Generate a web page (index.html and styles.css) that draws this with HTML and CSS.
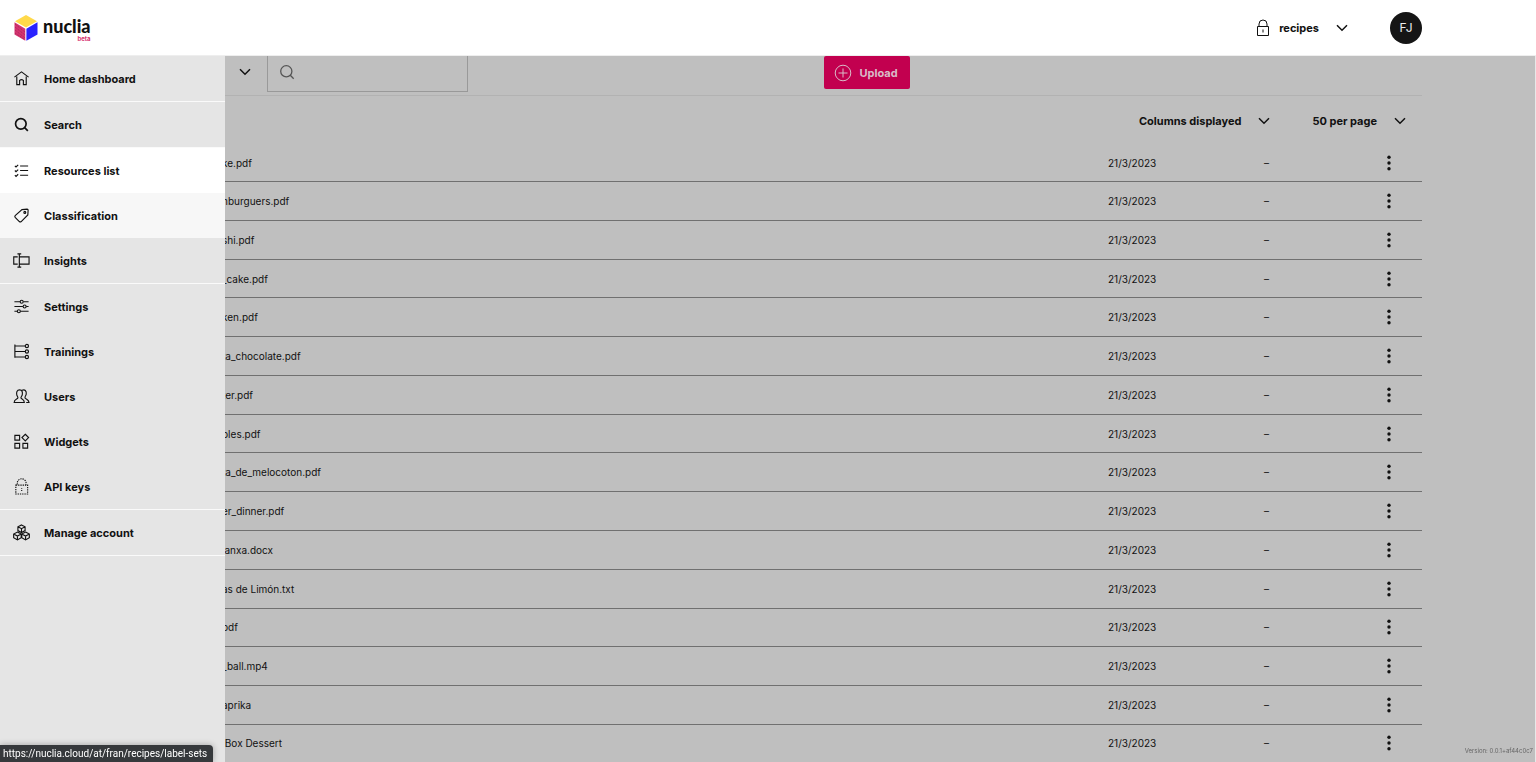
FILE: index.html
```html
<!DOCTYPE html>
<html lang="en">
<head>
<meta charset="utf-8">
<title>Nuclia – Resources list</title>
<link rel="stylesheet" href="styles.css">
</head>
<body>
<svg class="defs" aria-hidden="true">
  <symbol id="chevron" viewBox="0 0 12 8"><path d="M1 1.2l5 5 5-5"/></symbol>
  <symbol id="search" viewBox="0 0 18 18"><circle cx="8.3" cy="8.3" r="5.6"/><path d="M12.3 12.3l3.4 3.4"/></symbol>
  <symbol id="dots" viewBox="0 0 4 16"><circle cx="2" cy="2.2" r="1.7"/><circle cx="2" cy="8" r="1.7"/><circle cx="2" cy="13.8" r="1.7"/></symbol>
</svg>
<div class="app">
  <header class="header">
    <a class="brand" href="#" aria-label="nuclia beta">
      <svg class="brand-mark" viewBox="0 0 24 26">
        <path fill="#ffd94a" d="M12 0l11 6.200-11 6.300L1 6.200z"/>
        <path fill="#d6336f" d="M.500 7.300l10.800 6.400v12L.500 19.400z"/>
        <path fill="#2a22ff" d="M23.500 7.300l-11.100 6.400v12l11.100-6.300z"/>
        <path class="hatch" d="M1 9l10 8M1 12l10 8M1 15l10 8M1 18l9 6"/>
      </svg>
      <span class="brand-text"><span class="brand-name">nuclia</span><span class="brand-tag">beta</span></span>
    </a>
    <div class="header-right">
      <button class="kb-select" type="button">
        <svg class="lock" viewBox="0 0 14 18"><path d="M1.5 7.5h11v9h-11zM3 7.5V5a4 4 0 0 1 8 0v2.500M7 10.500v3"/></svg>
        <span class="kb-name">recipes</span>
        <svg class="chevron"><use href="#chevron"/></svg>
      </button>
      <button class="avatar" type="button">FJ</button>
    </div>
  </header>
  <div class="body">
    <nav class="sidebar">
      <a class="item line" href="#"><svg viewBox="0 0 18 18"><path d="M1.500 7.500L9 2l7.500 5.500M4 7v8.500h3V11q2-1.500 4 0v4.500h3V7"/></svg>Home dashboard</a>
      <a class="item line bold" href="#"><svg><use href="#search"/></svg>Search</a>
      <a class="item active" href="#"><svg viewBox="0 0 18 18"><path d="M2 4l1.200 1.200L5.500 3M2 9l1.200 1.200L5.500 8M2 14l1.200 1.200L5.500 13M7.500 4.200H16M7.500 9H16M7.500 14H16"/></svg>Resources list</a>
      <a class="item hover" href="#"><svg viewBox="0 0 18 18"><path d="M9.500 2.800L15 2.200q1 0 1 1l-.3 5.200-7 7q-1 .9-2 0L2.300 11q-.8-1 0-1.900z"/><circle cx="12.500" cy="5.700" r="1"/></svg>Classification</a>
      <a class="item line" href="#"><svg viewBox="0 0 18 18"><path d="M7 5.200h10v7.600H7M5 5.200H.800v7.600H5M6.700 2.500v13M4.700 2h4M4.700 16h4"/></svg>Insights</a>
      <a class="item" href="#"><svg viewBox="0 0 18 18"><path d="M1.500 4h6M11 4h5.500M1.500 9h9M14 9h2.500M1.500 14h3M8 14h8.500"/><circle cx="9.200" cy="4" r="1.600"/><circle cx="12.300" cy="9" r="1.600"/><circle cx="6.200" cy="14" r="1.600"/></svg>Settings</a>
      <a class="item" href="#"><svg viewBox="0 0 18 18"><path d="M2 1.500v14M2 3.200h11M2 9h11M2 14.800h11"/><circle cx="14.700" cy="3.200" r="1.700"/><circle cx="14.700" cy="9" r="1.700"/><circle cx="14.700" cy="14.800" r="1.700"/></svg>Trainings</a>
      <a class="item" href="#"><svg viewBox="0 0 18 18"><path d="M7 2c-3 0-3.500 3-3 5.200.3 1.300 1.200 2 1.200 3.200 0 1.500-4 1.400-4 4.900H12c0-3.500-3.600-3.400-3.600-4.900 0-1.200 1.100-1.900 1.400-3.200C10.200 5 10 2 7 2zM9.500 2.500c3-1.500 5 .5 4.500 4-.2 1.500-1.300 2.300-1.300 3.700 0 1.600 4 1.600 4.300 5.100h-3"/></svg>Users</a>
      <a class="item" href="#"><svg viewBox="0 0 18 18"><path d="M2 2.500h5v5H2zM2 11h5v5H2zM10.500 11h5v5h-5zM13 1.300l3.500 3.500L13 8.300 9.500 4.800z"/></svg>Widgets</a>
      <a class="item line" href="#"><svg viewBox="0 0 18 18"><path class="dotted" d="M3 7.500h12.500V17H3zM4.500 7V5.500a4.700 4.700 0 0 1 9.400 0V7"/><path d="M9.200 10.500v1M9.200 12.800v1"/></svg>API keys</a>
      <a class="item line" href="#"><svg viewBox="0 0 18 18"><path d="M9 1l3.800 2v4L9 9 5.200 7V3zM5.200 3L9 5l3.800-2M9 5v4M4.700 8.500l4 2.100v4l-4 2.300-4-2.300v-4zM.700 10.600l4 2.100 4-2.100M4.700 12.700v4.200M13.300 8.500l4 2.100v4l-4 2.300-4-2.300v-4zM9.300 10.600l4 2.100 4-2.100M13.300 12.700v4.200"/></svg>Manage account</a>
    </nav>
    <main class="main">
      <div class="toolbar">
        <div class="filters">
          <button class="drop" type="button" aria-label="Filter"><svg class="chevron"><use href="#chevron"/></svg></button>
          <label class="search"><svg><use href="#search"/></svg><input type="text" aria-label="Search resources"></label>
        </div>
        <div>
          <button class="upload" type="button"><svg viewBox="0 0 18 18"><circle cx="9" cy="9" r="7.800"/><path d="M9 4.500v9M4.500 9h9"/></svg>Upload</button>
        </div>
      </div>
      <div class="options">
        <button class="option" type="button">Columns displayed<svg class="chevron"><use href="#chevron"/></svg></button>
        <button class="option" type="button">50 per page<svg class="chevron"><use href="#chevron"/></svg></button>
      </div>
      <div class="table-area">
      <table class="resources">
        <colgroup><col><col class="c-date"><col class="c-status"><col class="c-menu"></colgroup>
        <tbody>
          <tr><td>ke.pdf</td><td>21/3/2023</td><td>–</td><td><button class="kebab" type="button" aria-label="Actions"><svg><use href="#dots"/></svg></button></td></tr>
          <tr><td>nburguers.pdf</td><td>21/3/2023</td><td>–</td><td><button class="kebab" type="button" aria-label="Actions"><svg><use href="#dots"/></svg></button></td></tr>
          <tr><td>shi.pdf</td><td>21/3/2023</td><td>–</td><td><button class="kebab" type="button" aria-label="Actions"><svg><use href="#dots"/></svg></button></td></tr>
          <tr><td>_cake.pdf</td><td>21/3/2023</td><td>–</td><td><button class="kebab" type="button" aria-label="Actions"><svg><use href="#dots"/></svg></button></td></tr>
          <tr><td>ken.pdf</td><td>21/3/2023</td><td>–</td><td><button class="kebab" type="button" aria-label="Actions"><svg><use href="#dots"/></svg></button></td></tr>
          <tr><td>ta_chocolate.pdf</td><td>21/3/2023</td><td>–</td><td><button class="kebab" type="button" aria-label="Actions"><svg><use href="#dots"/></svg></button></td></tr>
          <tr><td>ter.pdf</td><td>21/3/2023</td><td>–</td><td><button class="kebab" type="button" aria-label="Actions"><svg><use href="#dots"/></svg></button></td></tr>
          <tr><td>ples.pdf</td><td>21/3/2023</td><td>–</td><td><button class="kebab" type="button" aria-label="Actions"><svg><use href="#dots"/></svg></button></td></tr>
          <tr><td>ta_de_melocoton.pdf</td><td>21/3/2023</td><td>–</td><td><button class="kebab" type="button" aria-label="Actions"><svg><use href="#dots"/></svg></button></td></tr>
          <tr><td>er_dinner.pdf</td><td>21/3/2023</td><td>–</td><td><button class="kebab" type="button" aria-label="Actions"><svg><use href="#dots"/></svg></button></td></tr>
          <tr><td>lanxa.docx</td><td>21/3/2023</td><td>–</td><td><button class="kebab" type="button" aria-label="Actions"><svg><use href="#dots"/></svg></button></td></tr>
          <tr><td>as de Limón.txt</td><td>21/3/2023</td><td>–</td><td><button class="kebab" type="button" aria-label="Actions"><svg><use href="#dots"/></svg></button></td></tr>
          <tr><td>pdf</td><td>21/3/2023</td><td>–</td><td><button class="kebab" type="button" aria-label="Actions"><svg><use href="#dots"/></svg></button></td></tr>
          <tr><td>_ball.mp4</td><td>21/3/2023</td><td>–</td><td><button class="kebab" type="button" aria-label="Actions"><svg><use href="#dots"/></svg></button></td></tr>
          <tr><td>aprika</td><td>21/3/2023</td><td>–</td><td><button class="kebab" type="button" aria-label="Actions"><svg><use href="#dots"/></svg></button></td></tr>
          <tr><td>&nbsp;Box Dessert</td><td>21/3/2023</td><td>–</td><td><button class="kebab" type="button" aria-label="Actions"><svg><use href="#dots"/></svg></button></td></tr>
        </tbody>
      </table>
      </div>
    </main>
  </div>
</div>
<div class="version">Version: 0.0.1+af44c0c7</div>
<div class="status">https://nuclia.cloud/at/fran/recipes/label-sets</div>
</body>
</html>
```
FILE: styles.css
```css
* { box-sizing: border-box; }
body {
  margin: 0;
  background: #bfbfbf;
  color: #111;
  font-family: Inter, "Liberation Sans", sans-serif;
  font-size: 11px;
  line-height: 16px;
}
button, input {
  margin: 0;
  padding: 0;
  border: 0;
  background: none;
  color: inherit;
  font: inherit;
}
button { cursor: pointer; }
a { color: inherit; text-decoration: none; }
svg { display: block; flex: none; fill: none; stroke: currentColor; }
.defs { position: absolute; width: 0; height: 0; }
.chevron { width: 12px; height: 8px; stroke-width: 1.5; }

.app { display: flex; flex-direction: column; min-height: 100vh; }
.header {
  display: flex;
  align-items: center;
  justify-content: space-between;
  height: 56px;
  padding: 0 114px 0 14px;
  background: #fff;
  border-bottom: 1px solid #eee;
}
.brand { display: flex; align-items: center; gap: 5px; }
.brand-mark { width: 24px; height: 26px; stroke: none; }
.brand-mark .hatch { stroke: #a12a5c; stroke-width: 1; stroke-dasharray: 1 1; }
.brand-text { display: flex; flex-direction: column; padding-top: 2px; }
.brand-name {
  font-family: Lato, sans-serif;
  font-size: 18px;
  font-weight: 900;
  line-height: 20px;
}
.brand-tag {
  align-self: flex-end;
  color: #d6336f;
  font-size: 6px;
  font-weight: 700;
  line-height: 6px;
}
.header-right { display: flex; align-items: center; gap: 42px; }
.kb-select { display: flex; align-items: center; font-weight: 700; }
.lock { width: 14px; height: 18px; margin-right: 9px; }
.kb-name { margin-right: 17px; }
.avatar {
  width: 32px;
  height: 32px;
  border-radius: 50%;
  background: #151515;
  color: #eee;
  font-size: 12px;
}

.body { display: flex; flex: 1; }
.sidebar {
  position: relative;
  z-index: 1;
  width: 225px;
  flex: none;
  background: #e5e5e5;
}
.item {
  display: flex;
  align-items: center;
  gap: 14px;
  height: 45px;
  padding-left: 13px;
  font-weight: 700;
}
.item svg { width: 17px; height: 17px; stroke-width: 1.2; }
.item.bold svg { stroke-width: 1.8; }
.item.line { height: 46px; border-bottom: 1px solid #fafafa; }
.item.active { background: #fff; }
.item.hover { background: #f7f7f7; }
.dotted { stroke-dasharray: 1.4 1; }

.main {
  display: flex;
  flex-direction: column;
  flex: 1;
  min-width: 0;
  padding-right: 113px;
  border-right: 1px solid #e8e8e8;
}
.toolbar {
  display: grid;
  grid-template-columns: 1fr 1fr;
  height: 40px;
  border-bottom: 1px solid #b2b2b2;
}
.filters { display: flex; align-items: flex-start; gap: 16px; padding-left: 14px; }
.drop { height: 32px; }
.search {
  display: flex;
  align-items: center;
  gap: 8px;
  width: 201px;
  height: 36px;
  padding: 0 10px 4px;
  border: 1px solid #999;
  border-top: 0;
}
.search svg { width: 18px; height: 18px; color: #555; stroke-width: 1.3; }
.search input { flex: 1; min-width: 0; outline: 0; }
.upload {
  display: flex;
  align-items: center;
  gap: 8px;
  height: 33px;
  padding: 0 12px 0 10px;
  border-radius: 2px;
  background: #c2004f;
  color: #d9bcc8;
  font-weight: 700;
}
.upload svg { width: 18px; height: 18px; }
.options {
  display: flex;
  justify-content: flex-end;
  gap: 42px;
  height: 48px;
  padding: 2px 16px 0 0;
}
.option { display: flex; align-items: center; gap: 17px; font-weight: 700; }

.table-area { display: grid; flex: 1; }
.resources {
  width: 100%;
  height: 100%;
  border-collapse: collapse;
  table-layout: fixed;
  font-size: 10px;
}
.c-date { width: 156px; }
.c-status { width: 92px; }
.c-menu { width: 66px; }
.resources td { padding: 0; line-height: 12px; }
.resources td:first-child { text-indent: -3px; }
.resources tr + tr { border-top: 1px solid #707070; }
.kebab { display: block; margin: 0 auto; }
.kebab svg { width: 4px; height: 16px; fill: #111; stroke: none; }

.version {
  position: fixed;
  right: 3px;
  bottom: 6px;
  color: #666;
  font-size: 6px;
  line-height: 10px;
}
.status {
  position: fixed;
  z-index: 2;
  left: 0;
  bottom: 0;
  padding: 1px 6px 0 3px;
  border-radius: 0 4px 0 0;
  background: #36393c;
  box-shadow: 0 0 6px rgba(0, 0, 0, .3);
  color: #fff;
  font-family: Roboto, sans-serif;
  font-size: 10px;
}
```
